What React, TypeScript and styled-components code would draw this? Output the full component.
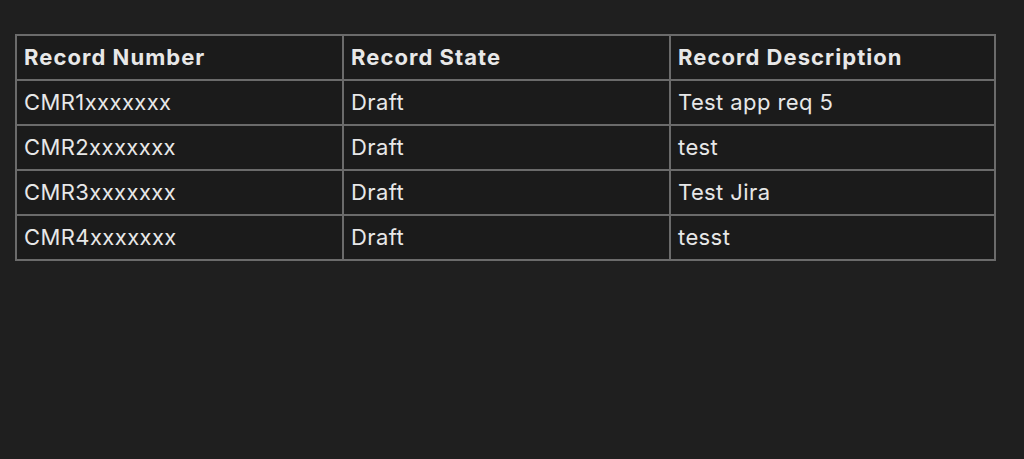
import React from "react";
import styled, { createGlobalStyle } from "styled-components";

const Global = createGlobalStyle`
  html, body { margin: 0; padding: 0; background: #1f1f1f; }
  body { font-family: Inter, "Noto Sans", sans-serif; color: #e6e6e6; }
`;

const Page = styled.div`
  padding: 34px 0 0 15px;
  min-height: 459px;
  box-sizing: border-box;
`;

const Table = styled.table`
  border-collapse: collapse;
  width: 979px;
  table-layout: fixed;
  background: #1b1b1b;
`;

const Th = styled.th`
  border: 2px solid #6b6b6b;
  height: 45px;
  padding: 0 0 2px 7px;
  text-align: left;
  font-size: 22px;
  font-weight: 700;
  letter-spacing: 1.05px;
  color: #e8e8e8;
  box-sizing: border-box;
`;

const Td = styled.td`
  border: 2px solid #6b6b6b;
  height: 45px;
  padding: 0 0 1px 7px;
  font-size: 22px;
  font-weight: 400;
  letter-spacing: 0.4px;
  color: #e8e8e8;
  box-sizing: border-box;
`;

const rows = [
  ["CMR1xxxxxxx", "Draft", "Test app req 5"],
  ["CMR2xxxxxxx", "Draft", "test"],
  ["CMR3xxxxxxx", "Draft", "Test Jira"],
  ["CMR4xxxxxxx", "Draft", "tesst"],
];

export default function App() {
  return (
    <>
      <Global />
      <Page>
        <Table>
          <colgroup>
            <col style={{ width: 327 }} />
            <col style={{ width: 327 }} />
            <col style={{ width: 325 }} />
          </colgroup>
          <thead>
            <tr>
              <Th>Record Number</Th>
              <Th>Record State</Th>
              <Th>Record Description</Th>
            </tr>
          </thead>
          <tbody>
            {rows.map((r) => (
              <tr key={r[0]}>
                {r.map((c, i) => (
                  <Td key={i}>{c}</Td>
                ))}
              </tr>
            ))}
          </tbody>
        </Table>
      </Page>
    </>
  );
}
